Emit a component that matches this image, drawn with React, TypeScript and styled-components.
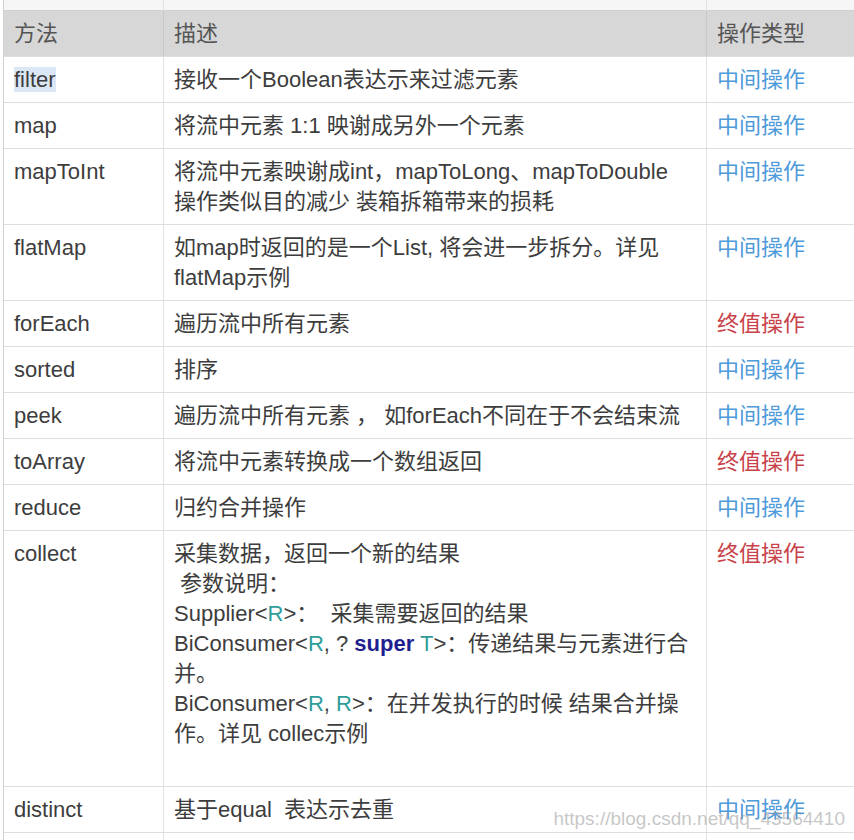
import React from "react";
import styled, { createGlobalStyle } from "styled-components";

type OpKind = "mid" | "end";

type Row = {
  method: string;
  lines: React.ReactNode[];
  kind: OpKind | null;
  selected?: boolean;
};

const GlobalStyle = createGlobalStyle`
  body {
    margin: 0;
    background: #ffffff;
    font-family: "Liberation Sans", "Noto Sans CJK SC", sans-serif;
  }
`;

const Page = styled.div`
  position: relative;
  width: 854px;
  height: 840px;
  overflow: hidden;
  background: #ffffff;
`;

const Table = styled.div`
  margin-left: 3px;
  border-left: 1px solid #cfcfcf;
  font-size: 22px;
  line-height: 30px;
  color: #3d3d3d;
`;

const RowBase = styled.div`
  display: grid;
  grid-template-columns: 160px 543px 1fr;
  border-bottom: 1px solid #dedede;
`;

const TopStrip = styled(RowBase)`
  height: 10px;
  background: #f6f6f6;
  border-bottom: 1px solid #d0d0d0;
`;

const HeaderRow = styled(RowBase)`
  background: #d7d7d7;
  color: #555555;
`;

const BodyRow = styled(RowBase)``;

const Cell = styled.div`
  padding: 8px 10px 7px 10px;
  border-right: 1px solid #e2e2e2;
  white-space: nowrap;
  &:last-child {
    border-right: none;
  }
`;

const HeadCell = styled(Cell)`
  border-right-color: #c8c8c8;
`;

const Line = styled.div`
  white-space: pre;
`;

const Selected = styled.span`
  background: #dbe7f5;
`;

const OpType = styled.span<{ $kind: OpKind }>`
  color: ${(p) => (p.$kind === "mid" ? "#4f9ad9" : "#c8424a")};
`;

const TypeParam = styled.span`
  color: #2e9d9a;
`;

const Keyword = styled.span`
  color: #1f1f8f;
  font-weight: bold;
`;

const Watermark = styled.div`
  position: absolute;
  right: 9px;
  bottom: 10px;
  font-family: "Liberation Sans", sans-serif;
  font-size: 19px;
  color: rgba(150, 150, 150, 0.55);
`;

const R = () => <TypeParam>R</TypeParam>;

const rows: Row[] = [
  { method: "filter", lines: ["接收一个Boolean表达示来过滤元素"], kind: "mid", selected: true },
  { method: "map", lines: ["将流中元素 1:1 映谢成另外一个元素"], kind: "mid" },
  {
    method: "mapToInt",
    lines: ["将流中元素映谢成int，mapToLong、mapToDouble", "操作类似目的减少 装箱拆箱带来的损耗"],
    kind: "mid",
  },
  { method: "flatMap", lines: ["如map时返回的是一个List, 将会进一步拆分。详见", "flatMap示例"], kind: "mid" },
  { method: "forEach", lines: ["遍历流中所有元素"], kind: "end" },
  { method: "sorted", lines: ["排序"], kind: "mid" },
  { method: "peek", lines: ["遍历流中所有元素 ， 如forEach不同在于不会结束流"], kind: "mid" },
  { method: "toArray", lines: ["将流中元素转换成一个数组返回"], kind: "end" },
  { method: "reduce", lines: ["归约合并操作"], kind: "mid" },
  {
    method: "collect",
    lines: [
      "采集数据，返回一个新的结果",
      " 参数说明：",
      <>Supplier&lt;<R />&gt;：  采集需要返回的结果</>,
      <>BiConsumer&lt;<R />, ? <Keyword>super</Keyword> <TypeParam>T</TypeParam>&gt;：传递结果与元素进行合</>,
      "并。",
      <>BiConsumer&lt;<R />, <R />&gt;：在并发执行的时候 结果合并操</>,
      "作。详见 collec示例",
      " ",
    ],
    kind: "end",
  },
  { method: "distinct", lines: ["基于equal  表达示去重"], kind: "mid" },
  { method: "", lines: [" "], kind: null },
];

const kindLabel: Record<OpKind, string> = { mid: "中间操作", end: "终值操作" };

const App = () => {
  return (
    <Page>
      <GlobalStyle />
      <Table>
        <TopStrip>
          <Cell />
          <Cell />
          <Cell />
        </TopStrip>
        <HeaderRow>
          <HeadCell>方法</HeadCell>
          <HeadCell>描述</HeadCell>
          <HeadCell>操作类型</HeadCell>
        </HeaderRow>
        {rows.map((row, i) => (
          <BodyRow key={i}>
            <Cell>
              {row.selected ? <Selected>{row.method}</Selected> : row.method}
            </Cell>
            <Cell>
              {row.lines.map((line, j) => (
                <Line key={j}>{line}</Line>
              ))}
            </Cell>
            <Cell>{row.kind && <OpType $kind={row.kind}>{kindLabel[row.kind]}</OpType>}</Cell>
          </BodyRow>
        ))}
      </Table>
      <Watermark>https://blog.csdn.net/qq_43564410</Watermark>
    </Page>
  );
};

export default App;
